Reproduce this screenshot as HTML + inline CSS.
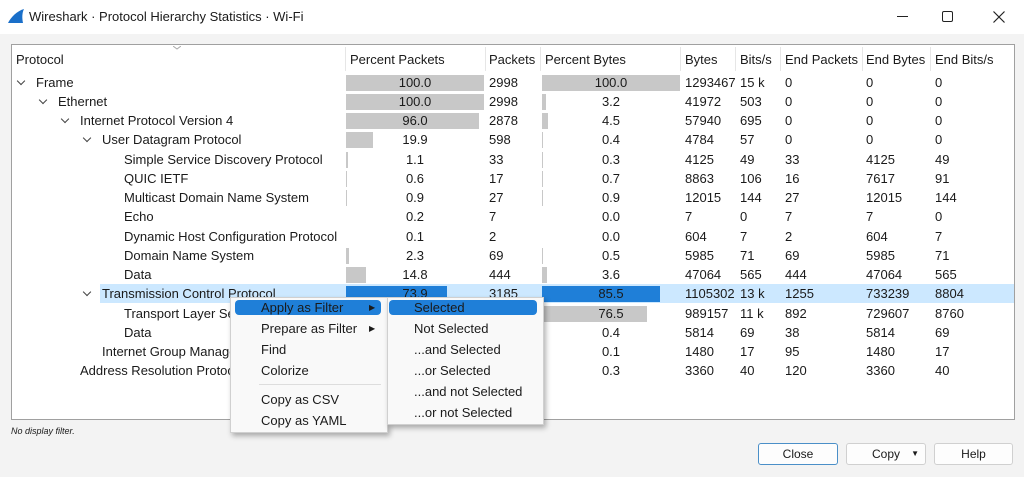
<!DOCTYPE html>
<html><head><meta charset="utf-8"><style>
*{box-sizing:border-box}
body{margin:0;width:1024px;height:477px;overflow:hidden;background:#f3f3f3;font-family:"Liberation Sans",sans-serif;font-size:13px;color:#1a1a1a;position:relative}
.abs{position:absolute}
.title{left:0;top:0;width:1024px;height:34px;background:#fff}
.tbox{left:11px;top:44px;width:1004px;height:376px;background:#fff;border:1px solid #a0a0a0}
.hdr{top:51px;height:18px;line-height:18px;white-space:nowrap}
.hsep{top:47px;width:1px;height:24px;background:#e6e6e6}
.row{position:absolute;left:0;width:1024px;height:19px;line-height:19px;white-space:nowrap}
.row span{position:absolute;top:0}
.bar{position:absolute;top:2px;height:16px;background:#c8c8c8}
.c{text-align:center}
.row i{position:absolute;top:5px;width:6px;height:6px;border-right:1.3px solid #444;border-bottom:1.3px solid #444;transform:rotate(45deg)}
.menu{background:#f9f9f9;border:1px solid #d0d0d0;box-shadow:2px 3px 5px rgba(0,0,0,.3)}
.mi{position:absolute;left:0;height:21px;line-height:21px;white-space:nowrap}
.btn{top:443px;height:22px;background:#fdfdfd;border:1px solid #d0d0d0;border-radius:3px;text-align:center;line-height:20px;font-size:12px}
</style></head><body>
<div class="abs title"></div>
<svg class="abs" style="left:7px;top:8px" width="18" height="16" viewBox="0 0 18 16"><path d="M1 15 C4 9 10 3 17 1 C15 5 15 10 16 15 Z" fill="#1a6fc9"/></svg>
<div class="abs" style="left:29px;top:9px;font-size:13px">Wireshark · Protocol Hierarchy Statistics · Wi-Fi</div>
<div class="abs" style="left:897px;top:16px;width:11px;height:1px;background:#222"></div>
<div class="abs" style="left:942px;top:11px;width:11px;height:11px;border:1px solid #222;border-radius:2px"></div>
<svg class="abs" style="left:993px;top:11px" width="12" height="12"><path d="M0.5 0.5L11.5 11.5M11.5 0.5L0.5 11.5" stroke="#222" stroke-width="1.2"/></svg>
<div class="abs tbox"></div>
<svg class="abs" style="left:173px;top:46px" width="8" height="4"><path d="M0 0L4 3L8 0" stroke="#aaa" fill="none"/></svg>
<div class="abs hdr" style="left:16px">Protocol</div>
<div class="abs hsep" style="left:345px"></div><div class="abs hdr" style="left:350px">Percent Packets</div>
<div class="abs hsep" style="left:485px"></div><div class="abs hdr" style="left:489px">Packets</div>
<div class="abs hsep" style="left:540px"></div><div class="abs hdr" style="left:545px">Percent Bytes</div>
<div class="abs hsep" style="left:680px"></div><div class="abs hdr" style="left:685px">Bytes</div>
<div class="abs hsep" style="left:735px"></div><div class="abs hdr" style="left:740px">Bits/s</div>
<div class="abs hsep" style="left:780px"></div><div class="abs hdr" style="left:785px">End Packets</div>
<div class="abs hsep" style="left:862px"></div><div class="abs hdr" style="left:866px">End Bytes</div>
<div class="abs hsep" style="left:930px"></div><div class="abs hdr" style="left:935px">End Bits/s</div>

<div class="row" style="top:73px"><i style="left:18px"></i><span style="left:36px">Frame</span><div class="bar" style="left:346px;width:138px"></div><span class="c" style="left:346px;width:138px">100.0</span><span style="left:489px">2998</span><div class="bar" style="left:542px;width:138px"></div><span class="c" style="left:542px;width:138px">100.0</span><span style="left:685px">1293467</span><span style="left:740px">15 k</span><span style="left:785px">0</span><span style="left:866px">0</span><span style="left:935px">0</span></div>
<div class="row" style="top:92px"><i style="left:40px"></i><span style="left:58px">Ethernet</span><div class="bar" style="left:346px;width:138px"></div><span class="c" style="left:346px;width:138px">100.0</span><span style="left:489px">2998</span><div class="bar" style="left:542px;width:4px"></div><span class="c" style="left:542px;width:138px">3.2</span><span style="left:685px">41972</span><span style="left:740px">503</span><span style="left:785px">0</span><span style="left:866px">0</span><span style="left:935px">0</span></div>
<div class="row" style="top:111px"><i style="left:62px"></i><span style="left:80px">Internet Protocol Version 4</span><div class="bar" style="left:346px;width:133px"></div><span class="c" style="left:346px;width:138px">96.0</span><span style="left:489px">2878</span><div class="bar" style="left:542px;width:6px"></div><span class="c" style="left:542px;width:138px">4.5</span><span style="left:685px">57940</span><span style="left:740px">695</span><span style="left:785px">0</span><span style="left:866px">0</span><span style="left:935px">0</span></div>
<div class="row" style="top:130px"><i style="left:84px"></i><span style="left:102px">User Datagram Protocol</span><div class="bar" style="left:346px;width:27px"></div><span class="c" style="left:346px;width:138px">19.9</span><span style="left:489px">598</span><div class="bar" style="left:542px;width:1px"></div><span class="c" style="left:542px;width:138px">0.4</span><span style="left:685px">4784</span><span style="left:740px">57</span><span style="left:785px">0</span><span style="left:866px">0</span><span style="left:935px">0</span></div>
<div class="row" style="top:150px"><span style="left:124px">Simple Service Discovery Protocol</span><div class="bar" style="left:346px;width:2px"></div><span class="c" style="left:346px;width:138px">1.1</span><span style="left:489px">33</span><div class="bar" style="left:542px;width:1px"></div><span class="c" style="left:542px;width:138px">0.3</span><span style="left:685px">4125</span><span style="left:740px">49</span><span style="left:785px">33</span><span style="left:866px">4125</span><span style="left:935px">49</span></div>
<div class="row" style="top:169px"><span style="left:124px">QUIC IETF</span><div class="bar" style="left:346px;width:1px"></div><span class="c" style="left:346px;width:138px">0.6</span><span style="left:489px">17</span><div class="bar" style="left:542px;width:1px"></div><span class="c" style="left:542px;width:138px">0.7</span><span style="left:685px">8863</span><span style="left:740px">106</span><span style="left:785px">16</span><span style="left:866px">7617</span><span style="left:935px">91</span></div>
<div class="row" style="top:188px"><span style="left:124px">Multicast Domain Name System</span><div class="bar" style="left:346px;width:1px"></div><span class="c" style="left:346px;width:138px">0.9</span><span style="left:489px">27</span><div class="bar" style="left:542px;width:1px"></div><span class="c" style="left:542px;width:138px">0.9</span><span style="left:685px">12015</span><span style="left:740px">144</span><span style="left:785px">27</span><span style="left:866px">12015</span><span style="left:935px">144</span></div>
<div class="row" style="top:207px"><span style="left:124px">Echo</span><span class="c" style="left:346px;width:138px">0.2</span><span style="left:489px">7</span><span class="c" style="left:542px;width:138px">0.0</span><span style="left:685px">7</span><span style="left:740px">0</span><span style="left:785px">7</span><span style="left:866px">7</span><span style="left:935px">0</span></div>
<div class="row" style="top:227px"><span style="left:124px">Dynamic Host Configuration Protocol</span><span class="c" style="left:346px;width:138px">0.1</span><span style="left:489px">2</span><span class="c" style="left:542px;width:138px">0.0</span><span style="left:685px">604</span><span style="left:740px">7</span><span style="left:785px">2</span><span style="left:866px">604</span><span style="left:935px">7</span></div>
<div class="row" style="top:246px"><span style="left:124px">Domain Name System</span><div class="bar" style="left:346px;width:3px"></div><span class="c" style="left:346px;width:138px">2.3</span><span style="left:489px">69</span><div class="bar" style="left:542px;width:1px"></div><span class="c" style="left:542px;width:138px">0.5</span><span style="left:685px">5985</span><span style="left:740px">71</span><span style="left:785px">69</span><span style="left:866px">5985</span><span style="left:935px">71</span></div>
<div class="row" style="top:265px"><span style="left:124px">Data</span><div class="bar" style="left:346px;width:20px"></div><span class="c" style="left:346px;width:138px">14.8</span><span style="left:489px">444</span><div class="bar" style="left:542px;width:5px"></div><span class="c" style="left:542px;width:138px">3.6</span><span style="left:685px">47064</span><span style="left:740px">565</span><span style="left:785px">444</span><span style="left:866px">47064</span><span style="left:935px">565</span></div>
<div class="row" style="top:284px;background:linear-gradient(to right,transparent 100px,#cce8ff 100px,#cce8ff 1014px,transparent 1014px)"><i style="left:84px"></i><span style="left:102px">Transmission Control Protocol</span><div class="bar" style="left:346px;width:101px;background:#1f7fd8"></div><span class="c" style="left:346px;width:138px">73.9</span><span style="left:489px">3185</span><div class="bar" style="left:542px;width:118px;background:#1f7fd8"></div><span class="c" style="left:542px;width:138px">85.5</span><span style="left:685px">1105302</span><span style="left:740px">13 k</span><span style="left:785px">1255</span><span style="left:866px">733239</span><span style="left:935px">8804</span></div>
<div class="row" style="top:304px"><span style="left:124px">Transport Layer Security</span><div class="bar" style="left:542px;width:105px"></div><span class="c" style="left:542px;width:138px">76.5</span><span style="left:685px">989157</span><span style="left:740px">11 k</span><span style="left:785px">892</span><span style="left:866px">729607</span><span style="left:935px">8760</span></div>
<div class="row" style="top:323px"><span style="left:124px">Data</span><div class="bar" style="left:542px;width:1px"></div><span class="c" style="left:542px;width:138px">0.4</span><span style="left:685px">5814</span><span style="left:740px">69</span><span style="left:785px">38</span><span style="left:866px">5814</span><span style="left:935px">69</span></div>
<div class="row" style="top:342px"><span style="left:102px">Internet Group Management Protocol</span><span class="c" style="left:542px;width:138px">0.1</span><span style="left:685px">1480</span><span style="left:740px">17</span><span style="left:785px">95</span><span style="left:866px">1480</span><span style="left:935px">17</span></div>
<div class="row" style="top:361px"><span style="left:80px">Address Resolution Protocol</span><span class="c" style="left:542px;width:138px">0.3</span><span style="left:685px">3360</span><span style="left:740px">40</span><span style="left:785px">120</span><span style="left:866px">3360</span><span style="left:935px">40</span></div>

<div class="abs" style="left:11px;top:426px;font-size:9px;font-style:italic">No display filter.</div>

<div class="abs menu" style="left:230px;top:297px;width:158px;height:136px">
 <div class="abs" style="left:4px;top:2px;width:146px;height:15px;background:#1f7fd8;border-radius:4px"></div>
 <div class="mi" style="left:30px;top:0px;line-height:19px">Apply as Filter</div><div class="mi" style="left:138px;top:0px;line-height:19px;font-size:8px">▶</div>
 <div class="mi" style="left:30px;top:20px">Prepare as Filter</div><div class="mi" style="left:138px;top:20px;font-size:8px">▶</div>
 <div class="mi" style="left:30px;top:41px">Find</div>
 <div class="mi" style="left:30px;top:62px">Colorize</div>
 <div class="abs" style="left:28px;top:86px;width:122px;height:1px;background:#ddd"></div>
 <div class="mi" style="left:30px;top:91px">Copy as CSV</div>
 <div class="mi" style="left:30px;top:112px">Copy as YAML</div>
</div>
<div class="abs menu" style="left:387px;top:297px;width:157px;height:128px">
 <div class="abs" style="left:1px;top:2px;width:148px;height:15px;background:#1f7fd8;border-radius:4px"></div>
 <div class="mi" style="left:26px;top:0px;line-height:19px">Selected</div>
 <div class="mi" style="left:26px;top:20px">Not Selected</div>
 <div class="mi" style="left:26px;top:41px">...and Selected</div>
 <div class="mi" style="left:26px;top:62px">...or Selected</div>
 <div class="mi" style="left:26px;top:83px">...and not Selected</div>
 <div class="mi" style="left:26px;top:104px">...or not Selected</div>
</div>

<div class="abs btn" style="left:758px;width:80px;border:1px solid #4a8fc8">Close</div>
<div class="abs btn" style="left:846px;width:80px">Copy<span style="position:absolute;right:6px;font-size:8px">▼</span></div>
<div class="abs btn" style="left:934px;width:79px">Help</div>
</body></html>
